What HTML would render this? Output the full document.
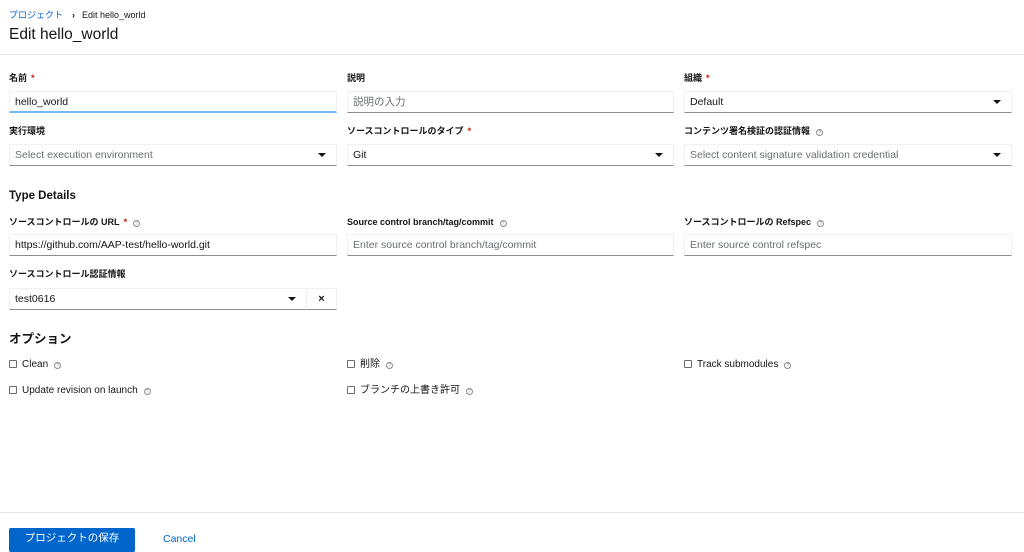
<!DOCTYPE html>
<html><head><meta charset="utf-8"><style>
*{box-sizing:border-box;margin:0;padding:0}
body{width:1024px;height:548px;overflow:hidden;background:#fff;font-family:"Liberation Sans","Noto Sans CJK JP",sans-serif;color:#151515;position:relative}
.a{position:absolute}
.hdr{position:absolute;left:0;top:0;width:1024px;height:55px;border-bottom:1px solid #e4e4e4}
.lbl{position:absolute;font-size:9px;line-height:12px;height:12px;font-weight:bold;white-space:nowrap}
.req{color:#c9190b;margin-left:4px}
.q{display:inline-block;width:7px;height:7px;border:1px solid #8a8d90;border-radius:50%;font-size:5px;line-height:6px;text-align:center;color:#8a8d90;margin-left:6px;vertical-align:0;font-weight:normal}
.in{position:absolute;height:22px;border:1px solid #f0f0f0;border-bottom:1px solid #8a8d90;font-size:10.5px;line-height:20px;padding-left:5px;white-space:nowrap}
.ph{color:#6a6e73}
.caret{position:absolute;right:10px;top:8px;width:0;height:0;border-left:4px solid transparent;border-right:4px solid transparent;border-top:4px solid #151515}
.h2{position:absolute;font-size:11.5px;line-height:14px;font-weight:bold}
.cb{position:absolute;font-size:10px;line-height:12px;height:12px;white-space:nowrap}
.cb i{display:inline-block;width:8px;height:8px;border:1px solid #6a6e73;border-radius:1px;margin-right:5px;vertical-align:-1px}
</style></head><body>
<div class="hdr">
<div class="a" style="left:9px;top:9px;font-size:9px;line-height:12px;white-space:nowrap"><span style="color:#06c">プロジェクト</span><span style="margin:0 7px 0 9px;font-weight:bold">›</span>Edit hello_world</div>
<div class="a" style="left:9px;top:25px;font-size:15.5px;line-height:20px;white-space:nowrap">Edit hello_world</div>
</div>

<div class="lbl" style="left:9px;top:72px">名前<span class="req">*</span></div>
<div class="in" style="left:9px;top:91px;width:328px;border-bottom:2px solid #73bcf7">hello_world</div>
<div class="lbl" style="left:347px;top:72px">説明</div>
<div class="in ph" style="left:347px;top:91px;width:327px">説明の入力</div>
<div class="lbl" style="left:684px;top:72px">組織<span class="req">*</span></div>
<div class="in" style="left:684px;top:91px;width:328px">Default<span class="caret"></span></div>

<div class="lbl" style="left:9px;top:125px">実行環境</div>
<div class="in ph" style="left:9px;top:144px;width:328px">Select execution environment<span class="caret"></span></div>
<div class="lbl" style="left:347px;top:125px">ソースコントロールのタイプ<span class="req">*</span></div>
<div class="in" style="left:347px;top:144px;width:327px">Git<span class="caret"></span></div>
<div class="lbl" style="left:684px;top:125px">コンテンツ署名検証の認証情報<span class="q">?</span></div>
<div class="in ph" style="left:684px;top:144px;width:328px">Select content signature validation credential<span class="caret"></span></div>

<div class="h2" style="left:9px;top:189px">Type Details</div>

<div class="lbl" style="left:9px;top:216px">ソースコントロールの URL<span class="req">*</span><span class="q">?</span></div>
<div class="in" style="left:9px;top:234px;width:328px">https://github.com/AAP-test/hello-world.git</div>
<div class="lbl" style="left:347px;top:216px">Source control branch/tag/commit<span class="q">?</span></div>
<div class="in ph" style="left:347px;top:234px;width:327px">Enter source control branch/tag/commit</div>
<div class="lbl" style="left:684px;top:216px">ソースコントロールの Refspec<span class="q">?</span></div>
<div class="in ph" style="left:684px;top:234px;width:328px">Enter source control refspec</div>

<div class="lbl" style="left:9px;top:268px">ソースコントロール認証情報</div>
<div class="in" style="left:9px;top:288px;width:298px">test0616<span class="caret"></span></div>
<div class="in" style="left:306px;top:288px;width:31px;text-align:center;padding:0;font-weight:bold;font-size:11px">×</div>

<div class="h2" style="left:9px;top:332px;font-size:12.5px">オプション</div>

<div class="cb" style="left:9px;top:359px"><i></i>Clean<span class="q">?</span></div>
<div class="cb" style="left:347px;top:359px"><i></i>削除<span class="q">?</span></div>
<div class="cb" style="left:684px;top:359px"><i></i>Track submodules<span class="q">?</span></div>
<div class="cb" style="left:9px;top:385px"><i></i>Update revision on launch<span class="q">?</span></div>
<div class="cb" style="left:347px;top:385px"><i></i>ブランチの上書き許可<span class="q">?</span></div>

<div class="a" style="left:0;top:512px;width:1024px;border-top:1px solid #e4e4e4"></div>
<div class="a" style="left:9px;top:528px;width:126px;height:24px;background:#06c;border-radius:2px;color:#fff;font-size:10.5px;text-align:center;line-height:20px">プロジェクトの保存</div>
<div class="a" style="left:163px;top:532px;color:#06c;font-size:10.5px;line-height:14px">Cancel</div>
</body></html>
